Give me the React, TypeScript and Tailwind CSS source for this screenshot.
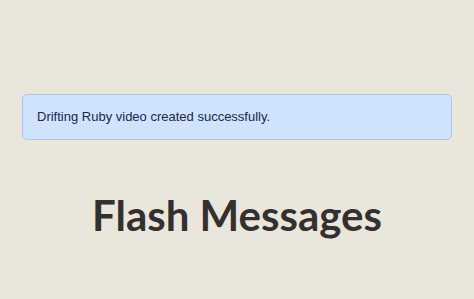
const App = () => {
    return (
        <div className="w-[474px] h-[299px] bg-[#ebe6db] flex flex-col pt-[94px]">
            <div className="mx-[22px] h-[46px] flex items-center px-[14px] bg-[#cfe2ff] border border-[#a9c6f0] rounded-[5px]">
                <p className="text-[#18284a] text-[13px]" style={{ fontFamily: '"Liberation Sans", Arial, sans-serif' }}>
                    Drifting Ruby video created successfully.
                </p>
            </div>
            <h1
                className="mt-[54px] text-center text-[42px] leading-none font-bold text-[#333030]"
                style={{ fontFamily: 'Lato, "Open Sans", sans-serif' }}>
                Flash Messages
            </h1>
        </div>
    );
};

export default App;
